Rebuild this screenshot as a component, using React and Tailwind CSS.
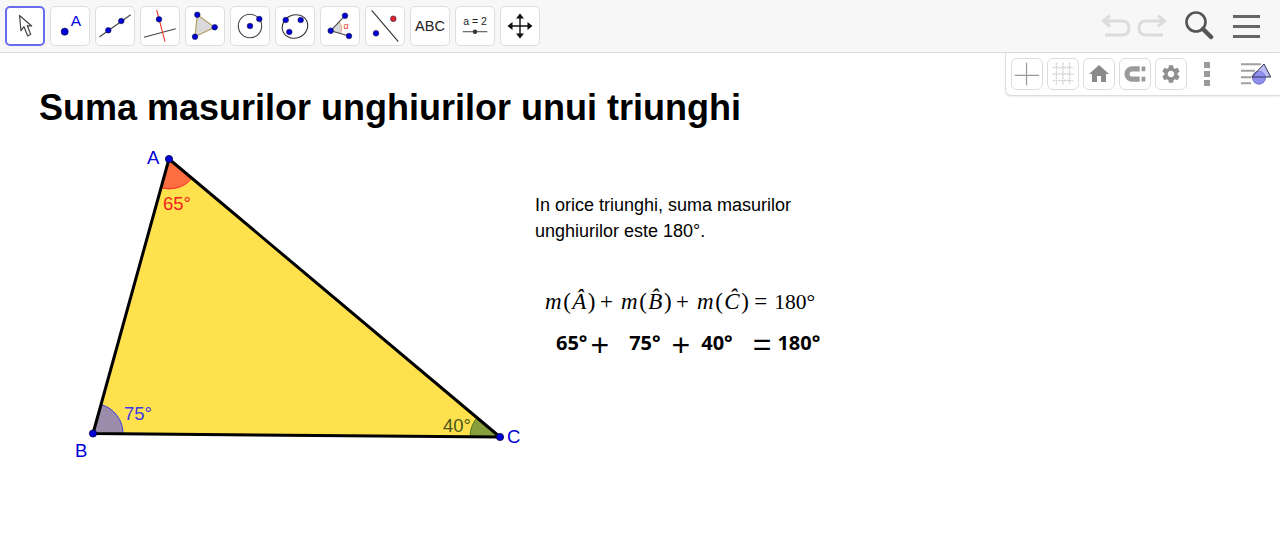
import React from "react";
import { MdHome, MdSettings } from "react-icons/md";

const BLUE = "#0000d8";

function Pt({ x, y, r = 2.8, fill = BLUE }) {
  return <circle cx={x} cy={y} r={r} fill={fill} stroke="#1a1a40" strokeWidth="0.6" />;
}

const TOOLS = [
  <path d="M14.5 9.5 L16 24.7 L19 20.7 L22.7 30 L25.7 28.3 L22.3 19.7 L26.7 20 Z" fill="#fff" stroke="#444" strokeWidth="1.2" strokeLinejoin="round" />,
  <>
    <circle cx="14.7" cy="25.7" r="3.6" fill={BLUE} stroke="#1a1a40" strokeWidth="0.6" />
    <text x="26" y="19.5" textAnchor="middle" fontSize="15.5" fill={BLUE}>A</text>
  </>,
  <>
    <line x1="4.3" y1="31" x2="35.7" y2="8.7" stroke="#444" strokeWidth="1.1" />
    <Pt x={13.3} y={24.3} />
    <Pt x={26.3} y={15} />
  </>,
  <>
    <line x1="4" y1="31.3" x2="35.7" y2="22.7" stroke="#444" strokeWidth="1.1" />
    <line x1="16.7" y1="4" x2="25" y2="35.7" stroke="#f03a2e" strokeWidth="1.1" />
    <Pt x={19} y={13.3} />
  </>,
  <>
    <polygon points="12.3,8.7 29.7,21.3 10,30.7" fill="#d9d9d9" stroke="#b09a5f" strokeWidth="1.1" />
    <Pt x={12.3} y={8.7} />
    <Pt x={29.7} y={21.3} />
    <Pt x={10} y={30.7} />
  </>,
  <>
    <circle cx="20" cy="20" r="11.7" fill="none" stroke="#444" strokeWidth="1.1" />
    <Pt x={20} y={20} />
    <Pt x={29.3} y={13} />
  </>,
  <>
    <ellipse cx="20" cy="20.5" rx="13" ry="11.5" transform="rotate(-25 20 20.5)" fill="none" stroke="#333" strokeWidth="1.1" />
    <Pt x={10.7} y={14} />
    <Pt x={25.7} y={14} />
    <Pt x={14.3} y={26} />
  </>,
  <>
    <path d="M10.7 24.7 L19 15.5 A12 12 0 0 1 20.5 27.5 Z" fill="#d9d9d9" />
    <path d="M19 15.5 A12 12 0 0 1 20.5 27.5" fill="none" stroke="#f0a080" strokeWidth="1" />
    <polyline points="25,9.7 10.7,24.7 29,30" fill="none" stroke="#444" strokeWidth="1.1" />
    <text x="26" y="23" textAnchor="middle" fontSize="9" fill="#f03a2e">α</text>
    <Pt x={10.7} y={24.7} />
    <Pt x={25} y={9.7} />
    <Pt x={29} y={30} />
  </>,
  <>
    <line x1="6.7" y1="4.3" x2="33.3" y2="35.7" stroke="#333" strokeWidth="1.1" />
    <Pt x={11} y={27.3} />
    <Pt x={28.3} y={12.7} fill="#e8202a" />
  </>,
  <text x="20" y="25" textAnchor="middle" fontSize="14.5" fill="#222">ABC</text>,
  <>
    <text x="20" y="19" textAnchor="middle" fontSize="10.5" fill="#222">a = 2</text>
    <line x1="7.7" y1="25.7" x2="32.3" y2="25.7" stroke="#555" strokeWidth="1.1" />
    <circle cx="20" cy="25.7" r="2.2" fill="#333" />
  </>,
  <>
    <path d="M20 11 V29 M11 20 H29" stroke="#111" strokeWidth="1.4" />
    <path d="M20 7.5 L24 12.5 H16 Z M20 32.5 L24 27.5 H16 Z M7.5 20 L12.5 16 V24 Z M32.5 20 L27.5 16 V24 Z" fill="#111" />
  </>,
];

function ToolButton({ selected, children }) {
  return (
    <button
      className={
        selected
          ? "w-10 h-10 rounded-[5px] bg-white border-2 border-[#6a6cf0] shrink-0"
          : "w-10 h-10 rounded-[5px] bg-white border border-[#dedede] shrink-0"
      }
    >
      <svg viewBox="0 0 40 40" className={selected ? "w-10 h-10 -m-[2px]" : "w-10 h-10 -m-px"}>
        {children}
      </svg>
    </button>
  );
}

function StyleButton({ children }) {
  return (
    <button className="w-8 h-8 rounded-[6px] bg-white border border-[#dddddd] flex items-center justify-center shrink-0">
      {children}
    </button>
  );
}

function Triangle() {
  return (
    <svg viewBox="0 53 1280 497" className="absolute inset-0 w-[1280px] h-[497px]">
      <polygon points="169,159 93,433.5 500,437" fill="#ffe14d" />
      <path d="M169 159 L161 187.9 A30 30 0 0 0 192 178.3 Z" fill="#ff6e40" />
      <path d="M161 187.9 A30 30 0 0 0 192 178.3" fill="none" stroke="#ff2a2a" strokeWidth="1" />
      <path d="M93 433.5 L101 404.6 A30 30 0 0 1 123 433.8 Z" fill="#9b8cab" />
      <path d="M101 404.6 A30 30 0 0 1 123 433.8" fill="none" stroke="#3a3ae8" strokeWidth="1" />
      <path d="M500 437 L470 436.7 A30 30 0 0 1 477 417.7 Z" fill="#87a03c" />
      <path d="M470 436.7 A30 30 0 0 1 477 417.7" fill="none" stroke="#4f7a20" strokeWidth="1" />
      <polygon points="169,159 93,433.5 500,437" fill="none" stroke="#000" strokeWidth="3" strokeLinejoin="round" />
      <circle cx="169" cy="159" r="3.6" fill={BLUE} stroke="#00003a" strokeWidth="0.8" />
      <circle cx="93" cy="433.5" r="3.6" fill={BLUE} stroke="#00003a" strokeWidth="0.8" />
      <circle cx="500" cy="437" r="3.6" fill={BLUE} stroke="#00003a" strokeWidth="0.8" />
      <g fontSize="18.5">
        <text x="147" y="164" fill={BLUE}>A</text>
        <text x="75" y="457" fill={BLUE}>B</text>
        <text x="507" y="443" fill={BLUE}>C</text>
        <text x="163" y="210" fill="#f21f1f">65°</text>
        <text x="124" y="420" fill="#3a3ae8">75°</text>
        <text x="443" y="432" fill="#48561c">40°</text>
      </g>
    </svg>
  );
}

export default function App() {
  return (
    <div className="w-[1280px] h-[550px] overflow-hidden bg-white flex flex-col font-['Liberation_Sans',Arial,sans-serif]">
      <header className="h-[53px] shrink-0 bg-[#f7f7f7] border-b border-[#dcdcdc] flex items-start pt-[6px] pl-[5px] pr-[20px]">
        <div className="flex gap-[5px]">
          {TOOLS.map((icon, i) => (
            <ToolButton key={i} selected={i === 0}>{icon}</ToolButton>
          ))}
        </div>
        <div className="ml-auto flex items-center h-10">
          <svg viewBox="0 0 30 24" className="w-[30px] h-6 mr-[6px]" fill="none" stroke="#dcdcdc" strokeWidth="3">
            <path d="M3 7 H21 Q28 7 28 14 Q28 21 21 21 H4" />
            <path d="M9 1.5 L2.5 7 L9 12.5" />
          </svg>
          <svg viewBox="0 0 30 24" className="w-[30px] h-6 mr-[17px]" fill="none" stroke="#dcdcdc" strokeWidth="3">
            <path d="M27 7 H9 Q2 7 2 14 Q2 21 9 21 H26" />
            <path d="M21 1.5 L27.5 7 L21 12.5" />
          </svg>
          <svg viewBox="0 0 30 30" className="w-[30px] h-[30px] mr-[19px]" fill="none" stroke="#555">
            <circle cx="12" cy="11" r="9.5" strokeWidth="2.6" />
            <path d="M19 18 L27 26" strokeWidth="4.5" strokeLinecap="round" />
          </svg>
          <div className="w-[27px] flex flex-col gap-[7px]">
            <div className="h-[3px] bg-[#666]" />
            <div className="h-[3px] bg-[#666]" />
            <div className="h-[3px] bg-[#666]" />
          </div>
        </div>
      </header>

      <main className="relative flex-1">
        <Triangle />

        <div className="absolute top-0 right-0 w-[275px] h-[43px] bg-white border-l border-b border-[#dddddd] rounded-bl-[6px] shadow-[0_1px_2px_rgba(0,0,0,0.08)] flex items-start pt-[5px] pl-[5px]">
          <div className="flex gap-1">
            <StyleButton>
              <svg viewBox="0 0 32 32" className="w-8 h-8" stroke="#999" strokeWidth="1.3">
                <path d="M3 17.5 H29 M15.5 4 V28" />
              </svg>
            </StyleButton>
            <StyleButton>
              <svg viewBox="0 0 32 32" className="w-8 h-8" stroke="#cfcfcf" strokeWidth="1.5" strokeDasharray="2 1">
                <path d="M5 9 H27 M5 16 H27 M5 23 H27 M9 4 V28 M16 4 V28 M23 4 V28" />
              </svg>
            </StyleButton>
            <StyleButton>
              <MdHome size={24} color="#8a8a8a" />
            </StyleButton>
            <StyleButton>
              <svg viewBox="0 0 32 32" className="w-8 h-8" fill="none">
                <path d="M21 10.5 H13 A5.5 5.5 0 0 0 13 21.5 H21" stroke="#9a9a9a" strokeWidth="5.5" />
                <path d="M23 8 H27 V13 H23 Z M23 19 H27 V24 H23 Z" fill="#9a9a9a" />
              </svg>
            </StyleButton>
            <StyleButton>
              <MdSettings size={22} color="#8f8f8f" />
            </StyleButton>
          </div>
          <div className="ml-[17px] mt-1 flex flex-col gap-[3px]">
            <div className="w-[6px] h-[6px] bg-[#9a9a9a]" />
            <div className="w-[6px] h-[6px] bg-[#9a9a9a]" />
            <div className="w-[6px] h-[6px] bg-[#9a9a9a]" />
          </div>
          <svg viewBox="0 0 34 28" className="ml-[30px] mt-[3px] w-[34px] h-7">
            <path d="M1 3.3 H21 M1 9.7 H15 M1 16.3 H11 M1 22.3 H11" stroke="#a0a0a0" strokeWidth="2" />
            <circle cx="19" cy="16.7" r="6.5" fill="#8f8ff0" stroke="#6060b0" strokeWidth="0.8" />
            <path d="M24 3 L30.7 16 H11.7 Z" fill="#8f8ff0" fillOpacity="0.6" stroke="#33334d" strokeWidth="1" />
          </svg>
        </div>

        <div className="relative pl-[39px] pt-[32px]">
          <h1 className="text-[36px] leading-[46px] font-bold text-black">
            Suma masurilor unghiurilor unui triunghi
          </h1>
          <div className="ml-[496px] mt-[61px] w-[320px]">
            <p className="text-[18px] leading-[26px] text-black">
              In orice triunghi, suma masurilor
              <br />
              unghiurilor este 180°.
            </p>
            <div className="ml-[10px] mt-[44px] flex items-baseline leading-[28px] whitespace-nowrap text-black font-['Liberation_Serif',serif]">
              <span className="text-[23px] tracking-[1.5px]"><i>m</i>(<i>Â</i>)</span>
              <span className="ml-[3px] text-[23px]">+</span>
              <span className="ml-[8px] text-[23px] tracking-[1.5px]"><i>m</i>(<i>B̂</i>)</span>
              <span className="ml-[3px] text-[23px]">+</span>
              <span className="ml-[8px] text-[23px] tracking-[1.5px]"><i>m</i>(<i>Ĉ</i>)</span>
              <span className="ml-[4px] text-[23px]">=</span>
              <span className="ml-[7px] text-[21.5px]">180°</span>
            </div>
            <div className="ml-[21px] mt-[9px] flex items-baseline leading-[28px] font-bold text-black whitespace-nowrap font-['Open_Sans',sans-serif] text-[20px]">
              <span>65°</span>
              <span className="ml-[3px] translate-y-[6px] text-[32px] font-normal font-['Liberation_Sans',sans-serif]">+</span>
              <span className="ml-[20px]">75°</span>
              <span className="ml-[11px] translate-y-[6px] text-[32px] font-normal font-['Liberation_Sans',sans-serif]">+</span>
              <span className="ml-[11px]">40°</span>
              <span className="ml-[20px] translate-y-[5px] text-[32px] font-normal font-['Liberation_Sans',sans-serif]">=</span>
              <span className="ml-[6px]">180°</span>
            </div>
          </div>
        </div>
      </main>
    </div>
  );
}
